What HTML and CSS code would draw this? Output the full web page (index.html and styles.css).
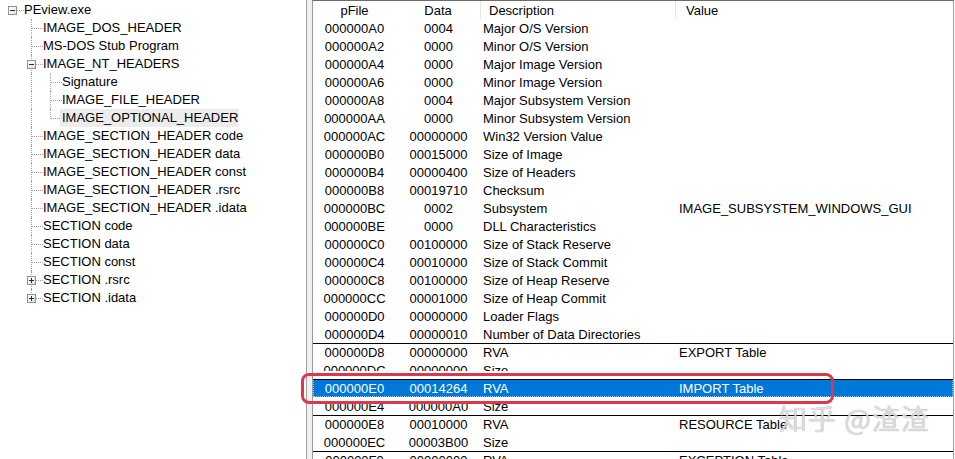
FILE: index.html
```html
<!DOCTYPE html>
<html>
<head>
<meta charset="utf-8">
<link rel="stylesheet" href="styles.css">
</head>
<body>
<div class="app">
  <div class="tree-pane">
    <div class="tree">
      <div class="trow"><span class="g r"><i class="box minus"></i></span><span class="lbl">PEview.exe</span></div>
      <div class="trow"><span class="g"></span><span class="g t"></span><span class="lbl">IMAGE_DOS_HEADER</span></div>
      <div class="trow"><span class="g"></span><span class="g t"></span><span class="lbl">MS-DOS Stub Program</span></div>
      <div class="trow"><span class="g"></span><span class="g t"><i class="box minus"></i></span><span class="lbl">IMAGE_NT_HEADERS</span></div>
      <div class="trow"><span class="g"></span><span class="g v"></span><span class="g t"></span><span class="lbl">Signature</span></div>
      <div class="trow"><span class="g"></span><span class="g v"></span><span class="g t"></span><span class="lbl">IMAGE_FILE_HEADER</span></div>
      <div class="trow"><span class="g"></span><span class="g v"></span><span class="g c"></span><span class="lbl sel">IMAGE_OPTIONAL_HEADER</span></div>
      <div class="trow"><span class="g"></span><span class="g t"></span><span class="lbl">IMAGE_SECTION_HEADER code</span></div>
      <div class="trow"><span class="g"></span><span class="g t"></span><span class="lbl">IMAGE_SECTION_HEADER data</span></div>
      <div class="trow"><span class="g"></span><span class="g t"></span><span class="lbl">IMAGE_SECTION_HEADER const</span></div>
      <div class="trow"><span class="g"></span><span class="g t"></span><span class="lbl">IMAGE_SECTION_HEADER .rsrc</span></div>
      <div class="trow"><span class="g"></span><span class="g t"></span><span class="lbl">IMAGE_SECTION_HEADER .idata</span></div>
      <div class="trow"><span class="g"></span><span class="g t"></span><span class="lbl">SECTION code</span></div>
      <div class="trow"><span class="g"></span><span class="g t"></span><span class="lbl">SECTION data</span></div>
      <div class="trow"><span class="g"></span><span class="g t"></span><span class="lbl">SECTION const</span></div>
      <div class="trow"><span class="g"></span><span class="g t"><i class="box plus"></i></span><span class="lbl">SECTION .rsrc</span></div>
      <div class="trow"><span class="g"></span><span class="g c"><i class="box plus"></i></span><span class="lbl">SECTION .idata</span></div>
    </div>
  </div>
  <div class="splitter"></div>
  <div class="list-pane">
    <div class="lhead"><span class="c1">pFile</span><span class="c2">Data</span><span class="c3">Description</span><span class="c4">Value</span></div>
    <div class="lrow"><span class="c1">000000A0</span><span class="c2">0004</span><span class="c3">Major O/S Version</span><span class="c4"></span></div>
    <div class="lrow"><span class="c1">000000A2</span><span class="c2">0000</span><span class="c3">Minor O/S Version</span><span class="c4"></span></div>
    <div class="lrow"><span class="c1">000000A4</span><span class="c2">0000</span><span class="c3">Major Image Version</span><span class="c4"></span></div>
    <div class="lrow"><span class="c1">000000A6</span><span class="c2">0000</span><span class="c3">Minor Image Version</span><span class="c4"></span></div>
    <div class="lrow"><span class="c1">000000A8</span><span class="c2">0004</span><span class="c3">Major Subsystem Version</span><span class="c4"></span></div>
    <div class="lrow"><span class="c1">000000AA</span><span class="c2">0000</span><span class="c3">Minor Subsystem Version</span><span class="c4"></span></div>
    <div class="lrow"><span class="c1">000000AC</span><span class="c2">00000000</span><span class="c3">Win32 Version Value</span><span class="c4"></span></div>
    <div class="lrow"><span class="c1">000000B0</span><span class="c2">00015000</span><span class="c3">Size of Image</span><span class="c4"></span></div>
    <div class="lrow"><span class="c1">000000B4</span><span class="c2">00000400</span><span class="c3">Size of Headers</span><span class="c4"></span></div>
    <div class="lrow"><span class="c1">000000B8</span><span class="c2">00019710</span><span class="c3">Checksum</span><span class="c4"></span></div>
    <div class="lrow"><span class="c1">000000BC</span><span class="c2">0002</span><span class="c3">Subsystem</span><span class="c4">IMAGE_SUBSYSTEM_WINDOWS_GUI</span></div>
    <div class="lrow"><span class="c1">000000BE</span><span class="c2">0000</span><span class="c3">DLL Characteristics</span><span class="c4"></span></div>
    <div class="lrow"><span class="c1">000000C0</span><span class="c2">00100000</span><span class="c3">Size of Stack Reserve</span><span class="c4"></span></div>
    <div class="lrow"><span class="c1">000000C4</span><span class="c2">00010000</span><span class="c3">Size of Stack Commit</span><span class="c4"></span></div>
    <div class="lrow"><span class="c1">000000C8</span><span class="c2">00100000</span><span class="c3">Size of Heap Reserve</span><span class="c4"></span></div>
    <div class="lrow"><span class="c1">000000CC</span><span class="c2">00001000</span><span class="c3">Size of Heap Commit</span><span class="c4"></span></div>
    <div class="lrow"><span class="c1">000000D0</span><span class="c2">00000000</span><span class="c3">Loader Flags</span><span class="c4"></span></div>
    <div class="lrow"><span class="c1">000000D4</span><span class="c2">00000010</span><span class="c3">Number of Data Directories</span><span class="c4"></span></div>
    <div class="lrow sep"><span class="c1">000000D8</span><span class="c2">00000000</span><span class="c3">RVA</span><span class="c4">EXPORT Table</span></div>
    <div class="lrow clip-low"><span class="c1">000000DC</span><span class="c2">00000000</span><span class="c3">Size</span><span class="c4"></span></div>
    <div class="lrow sep selected"><span class="c1">000000E0</span><span class="c2">00014264</span><span class="c3">RVA</span><span class="c4">IMPORT Table</span></div>
    <div class="lrow clip-high"><span class="c1">000000E4</span><span class="c2">000000A0</span><span class="c3">Size</span><span class="c4"></span></div>
    <div class="lrow sep"><span class="c1">000000E8</span><span class="c2">00010000</span><span class="c3">RVA</span><span class="c4">RESOURCE Table</span></div>
    <div class="lrow"><span class="c1">000000EC</span><span class="c2">00003B00</span><span class="c3">Size</span><span class="c4"></span></div>
    <div class="lrow sep"><span class="c1">000000F0</span><span class="c2">00000000</span><span class="c3">RVA</span><span class="c4">EXCEPTION Table</span></div>
  </div>
</div>
<div class="mark-box"></div>
<div class="watermark">知乎 @渣渣</div>
</body>
</html>
```

FILE: styles.css
```css
html, body {
  margin: 0;
  padding: 0;
  background: #fff;
  overflow: hidden;
}
body {
  width: 955px;
  height: 459px;
  position: relative;
  font-family: "Liberation Sans", Arial, sans-serif;
  font-size: 13px;
  color: #000;
}
.app {
  display: flex;
  height: 459px;
}

/* ---------- tree ---------- */
.tree-pane {
  width: 306px;
  flex: none;
  border-right: 1px solid #a0a0a0;
  background: #fff;
  overflow: hidden;
}
.tree {
  padding-left: 3px;
  padding-top: 1px;
}
.trow {
  display: flex;
  height: 18px;
  line-height: 18px;
}
.g {
  width: 19px;
  height: 18px;
  flex: none;
  position: relative;
  box-sizing: border-box;
  padding: 5px 0 0 5px;
}
.g.v::before,
.g.t::before {
  content: "";
  position: absolute;
  left: 9px;
  top: 0;
  bottom: 0;
  border-left: 1px dotted #a0a0a0;
}
.g.c::before {
  content: "";
  position: absolute;
  left: 9px;
  top: 0;
  height: 10px;
  border-left: 1px dotted #a0a0a0;
}
.g.t::after,
.g.c::after,
.g.r::after {
  content: "";
  position: absolute;
  left: 10px;
  width: 11px;
  top: 9px;
  border-top: 1px dotted #a0a0a0;
}
.box {
  position: relative;
  z-index: 1;
  display: block;
  width: 9px;
  height: 9px;
  box-sizing: border-box;
  border: 1px solid #919191;
  background: linear-gradient(135deg, #ffffff 0%, #f2f2f2 50%, #dcdcdc 100%);
}
.box::before {
  content: "";
  position: absolute;
  left: 1px;
  top: 3px;
  width: 5px;
  height: 1px;
  background: #2b2b2b;
}
.box.plus::after {
  content: "";
  position: absolute;
  left: 3px;
  top: 1px;
  width: 1px;
  height: 5px;
  background: #2b2b2b;
}
.lbl {
  position: relative;
  z-index: 2;
  padding: 0 1px 0 2px;
  white-space: nowrap;
}
.lbl.sel {
  background: #ececec;
}

/* ---------- splitter ---------- */
.splitter {
  width: 5px;
  flex: none;
  background: #f0f0f0;
}

/* ---------- list ---------- */
.list-pane {
  flex: 1;
  margin-right: 1px;
  border-top: 1px solid #6c6c6c;
  border-left: 1px solid #9a9a9a;
  border-right: 1px solid #a0a0a0;
  background: #fff;
  overflow: hidden;
}
.lhead,
.lrow {
  display: grid;
  grid-template-columns: 83px 85px 195px 1fr;
  height: 18px;
  line-height: 20px;
  white-space: nowrap;
  position: relative;
}
.lhead span {
  box-sizing: border-box;
  height: 18px;
}
.lhead .c2,
.lhead .c3 {
  border-right: 1px solid #e5e5e5;
}
.c1, .c2 {
  text-align: center;
}
.lrow .c3 { padding-left: 2px; }
.lrow .c4 { padding-left: 3px; }
.lhead .c3 { padding-left: 8px; }
.lhead .c4 { padding-left: 10px; }

.lrow.sep {
  box-shadow: inset 0 1px 0 #000;
}
.lrow.clip-low {
  clip-path: inset(0 0 8px 0);
}
.lrow.clip-high {
  clip-path: inset(6px 0 0 0);
}
.lrow.selected {
  background: #0078d7;
  color: #fff;
}
.lrow.selected::after {
  content: "";
  position: absolute;
  left: 0;
  right: 0;
  top: 1px;
  bottom: 0;
  border: 1px dotted rgba(255, 255, 255, 0.55);
  border-top: none;
}

/* ---------- annotations ---------- */
.mark-box {
  position: absolute;
  left: 301px;
  top: 373px;
  width: 533px;
  height: 31px;
  box-sizing: border-box;
  border: 3px solid #d83a4b;
  border-radius: 8px;
}
.watermark {
  position: absolute;
  left: 779px;
  top: 404px;
  font-family: "Noto Sans CJK SC", "Noto Sans", sans-serif;
  font-size: 28px;
  line-height: 1;
  letter-spacing: 1px;
  color: rgba(232, 232, 232, 0.85);
  text-shadow: 0 0 1px rgba(0, 0, 0, 0.4);
  white-space: nowrap;
}
```
